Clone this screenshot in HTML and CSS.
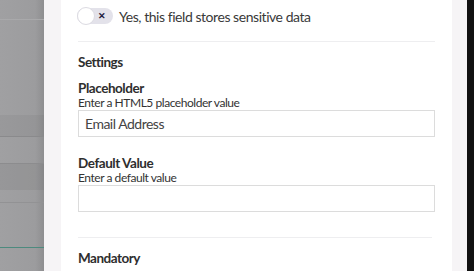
FILE: index.html
```html
<!DOCTYPE html>
<html>
<head>
<meta charset="utf-8">
<link rel="stylesheet" href="styles.css">
</head>
<body>
<div class="page">
  <div class="backdrop">
    <div class="bd-row bd-a"></div>
    <div class="bd-row bd-b"></div>
    <div class="bd-row bd-c"></div>
    <div class="bd-row bd-d"></div>
    <div class="bd-row bd-e"></div>
    <div class="bd-row bd-f"></div>
    <div class="bd-row bd-g"></div>
  </div>
  <div class="panel">
    <div class="card">
      <div class="toggle-row">
        <span class="toggle"><span class="knob"></span><span class="x">✕</span></span>
        <span class="toggle-label">Yes, this field stores sensitive data</span>
      </div>
      <hr class="divider">
      <h3 class="section">Settings</h3>
      <div class="field">
        <div class="label">Placeholder</div>
        <div class="help">Enter a HTML5 placeholder value</div>
        <div class="input">Email Address</div>
      </div>
      <div class="field">
        <div class="label">Default Value</div>
        <div class="help">Enter a default value</div>
        <div class="input"></div>
      </div>
      <hr class="divider divider2">
      <h3 class="section">Mandatory</h3>
    </div>
  </div>
  <div class="edge"></div>
</div>
</body>
</html>
```
FILE: styles.css
```css
html, body { margin: 0; padding: 0; }
body { width: 474px; height: 271px; overflow: hidden; font-family: Lato, "Open Sans", sans-serif; }
.page { display: flex; height: 271px; }
.backdrop { width: 44px; flex: none; background: linear-gradient(to right, #a0a0a2 0%, #9c9c9e 80%, #8e8e90 100%); display: flex; flex-direction: column; }
.bd-row { border-bottom: 1px solid #8f8f92; }
.bd-a { height: 19px; border-bottom-color: #a9a9ab; }
.bd-b { height: 95px; border-bottom: none; }
.bd-c { height: 21px; background: rgba(0,0,0,0.04); border-bottom-color: #8a8a8c; }
.bd-d { height: 26px; border-bottom-color: #8c8c8e; }
.bd-e { height: 26px; background: rgba(0,0,0,0.05); border-bottom: none; }
.bd-f { height: 12px; border-bottom-color: #929294; }
.bd-g { height: 44px; border-bottom: 1px solid #4d8a7e; }
.panel { flex: 1; background: #f6f4f6; padding: 0 15px 0 17px; display: flex; }
.card { flex: 1; background: #fff; padding: 0 17px; color: #2e2e2e; }
.edge { width: 7px; flex: none; background: #111; }
.toggle-row { display: flex; align-items: center; height: 32px; }
.toggle { position: relative; width: 36px; height: 16px; border-radius: 9px; background: #e3e2ea; flex: none; margin-left: -1px; }
.knob { position: absolute; left: 0; top: -1px; width: 16px; height: 16px; border-radius: 50%; background: #fff; border: 1px solid #dcdbe2; }
.x { position: absolute; left: 21px; top: 0; line-height: 16px; font-size: 9px; font-weight: 900; color: #1f2040; }
.toggle-label { margin-left: 6px; font-size: 14px; letter-spacing: -0.45px; color: #3a3a3a; }
.divider { border: none; border-top: 1px solid #eeeef0; margin: 9px 0 0 0; }
.section { font-size: 13.5px; letter-spacing: -0.5px; font-weight: 700; margin: 12px 0 0 0; line-height: 16px; }
.field { margin-top: 11px; }
.label { font-size: 13.5px; letter-spacing: -0.45px; font-weight: 700; line-height: 15px; }
.help { font-size: 12px; letter-spacing: -0.45px; line-height: 14px; color: #333; }
.input { height: 25px; border: 1px solid #dcdcdc; font-size: 14px; letter-spacing: -0.5px; line-height: 25px; padding-left: 6px; color: #444; }
.field + .field { margin-top: 19px; }
.divider2 { margin-top: 25px; margin-right: 3px; }
.divider2 + .section { margin-top: 12px; }
```
